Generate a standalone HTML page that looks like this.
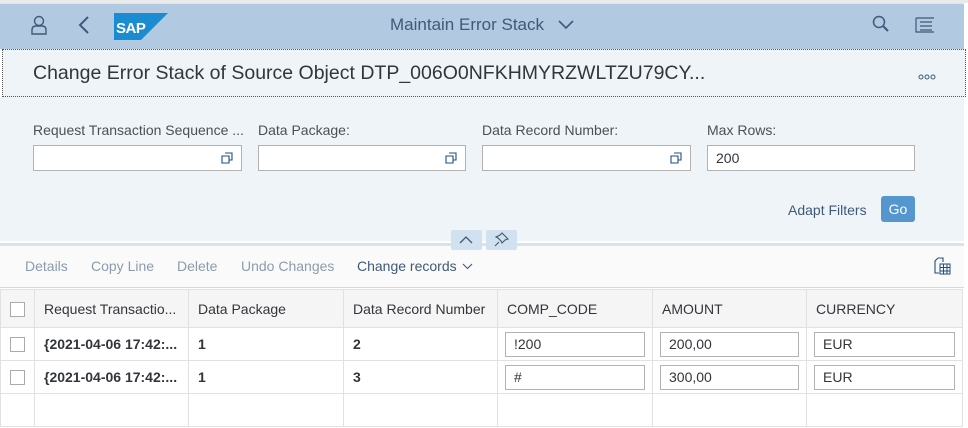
<!DOCTYPE html>
<html><head><meta charset="utf-8"><style>
*{box-sizing:border-box;margin:0;padding:0}
body{width:968px;height:428px;overflow:hidden;background:#fff;font-family:"Liberation Sans",Arial,sans-serif;position:relative;color:#32363a}
.abs{position:absolute}
.shell{left:0;top:3px;width:964px;height:46px;background:#b1c9e1;border-top:1px solid #dfe6ee}
.title{left:2px;top:49px;width:964px;height:48px;background:#eff4f9;border:1px dotted #555;}
.filt{left:0;top:97px;width:964px;height:144px;background:#eff4f9}
.lbl{font-size:14px;color:#4a5054;top:122px}
.inp{height:26px;background:#fff;border:1px solid #b2b2b2;top:145px}
.vh{position:absolute;right:8px;top:6px;width:12px;height:12px}
.tb{left:0;top:243px;width:964px;height:45px;background:#fafafa;border-top:3px solid #d6e3ef;border-bottom:1px solid #d9d9d9}
.tbt{top:258px;font-size:14px;color:#8b9cae}
table{position:absolute;left:0;top:289px;border-collapse:collapse;width:962px;table-layout:fixed}
td{border:1px solid #e1e1e1;font-size:14px;height:33px;padding:0 9px;vertical-align:middle;white-space:nowrap;overflow:hidden}
tr.h td{background:#f5f5f5;height:38px;color:#32363a}
tr.r td{font-weight:bold;color:#32363a;height:33px}
.cb{display:inline-block;width:15px;height:15px;border:1px solid #aaa;background:#fff;vertical-align:middle}
.ci{border:1px solid #b2b2b2;height:25px;font-weight:normal;padding-left:8px;line-height:23px;font-size:14px}
</style></head><body>
<div class="abs" style="left:0;top:0;width:968px;height:3px;background:#eaeaea"></div>
<div class="abs shell"></div>
<svg class="abs" style="left:30px;top:15px" width="18" height="20" viewBox="0 0 18 20"><circle cx="9" cy="6" r="4.5" fill="none" stroke="#3f5a78" stroke-width="1.4"/><path d="M2 19 V15 Q2 11 6 11 H12 Q16 11 16 15 V19 Z" fill="none" stroke="#3f5a78" stroke-width="1.4"/></svg>
<svg class="abs" style="left:78px;top:16px" width="12" height="18" viewBox="0 0 12 18"><path d="M10 1 L2 9 L10 17" fill="none" stroke="#3f5a78" stroke-width="2"/></svg>
<svg class="abs" style="left:114px;top:13px" width="54" height="27" viewBox="0 0 54 27"><path d="M0 0 H54 L27 27 H0 Z" fill="#1b8bd2"/><text x="2" y="20" font-family="Liberation Sans" font-weight="bold" font-size="15" fill="#fff" letter-spacing="-0.5">SAP</text></svg>
<div class="abs" style="left:390px;top:15px;font-size:17px;color:#3f5a78">Maintain Error Stack</div>
<svg class="abs" style="left:558px;top:20px" width="16" height="10" viewBox="0 0 16 10"><path d="M1 1 L8 8 L15 1" fill="none" stroke="#3f5a78" stroke-width="1.6"/></svg>
<svg class="abs" style="left:872px;top:15px" width="18" height="18" viewBox="0 0 18 18"><circle cx="7" cy="7" r="5.5" fill="none" stroke="#3f5a78" stroke-width="1.5"/><path d="M11 11 L16 16" stroke="#3f5a78" stroke-width="2"/></svg>
<svg class="abs" style="left:915px;top:17px" width="20" height="16" viewBox="0 0 20 16"><path d="M1 1 V15 H19 M1 1 H19 M5 5 H17 M5 9 H17 M5 13 H17" fill="none" stroke="#3f5a78" stroke-width="1.2"/></svg>
<div class="abs title"></div>
<div class="abs" style="left:33px;top:62px;font-size:19.5px;color:#32363a">Change Error Stack of Source Object DTP_006O0NFKHMYRZWLTZU79CY...</div>
<svg class="abs" style="left:918px;top:74px" width="18" height="6" viewBox="0 0 18 6"><circle cx="3" cy="3" r="2" fill="none" stroke="#3f5a78"/><circle cx="9" cy="3" r="2" fill="none" stroke="#3f5a78"/><circle cx="15" cy="3" r="2" fill="none" stroke="#3f5a78"/></svg>
<div class="abs filt"></div>
<div class="abs lbl" style="left:33px">Request Transaction Sequence ...</div>
<div class="abs lbl" style="left:258px">Data Package:</div>
<div class="abs lbl" style="left:482px">Data Record Number:</div>
<div class="abs lbl" style="left:707px">Max Rows:</div>
<div class="abs inp" style="left:33px;width:209px"><svg class="vh" viewBox="0 0 12 12"><path d="M4 1 H11 V8 H8 M1 4 H8 V11 H1 Z" fill="none" stroke="#1f4f85" stroke-width="1.1"/></svg></div>
<div class="abs inp" style="left:258px;width:208px"><svg class="vh" viewBox="0 0 12 12"><path d="M4 1 H11 V8 H8 M1 4 H8 V11 H1 Z" fill="none" stroke="#1f4f85" stroke-width="1.1"/></svg></div>
<div class="abs inp" style="left:482px;width:209px"><svg class="vh" viewBox="0 0 12 12"><path d="M4 1 H11 V8 H8 M1 4 H8 V11 H1 Z" fill="none" stroke="#1f4f85" stroke-width="1.1"/></svg></div>
<div class="abs inp" style="left:707px;width:208px;padding:4px 8px;font-size:14px;color:#32363a">200</div>
<div class="abs" style="left:788px;top:202px;font-size:14px;color:#3f5a78">Adapt Filters</div>
<div class="abs" style="left:881px;top:196px;width:34px;height:26px;background:#5496cd;border-radius:3px;color:#fff;font-size:14px;text-align:center;line-height:26px">Go</div>
<div class="abs tb"></div>
<div class="abs" style="left:451px;top:230px;width:31px;height:20px;background:#d1e1ef;border-radius:2px"></div>
<svg class="abs" style="left:459px;top:236px" width="14" height="8"><path d="M1 7 L7 1 L13 7" fill="none" stroke="#3f5a78" stroke-width="1.3"/></svg>
<div class="abs" style="left:486px;top:230px;width:31px;height:20px;background:#d1e1ef;border-radius:2px"></div>
<svg class="abs" style="left:494px;top:232px" width="15" height="15" viewBox="0 0 15 15"><path d="M8 1 L14 7 L11 8 L8 11 L7 9 L4 6 L2 5 L6 3 Z M5 10 L1 14" fill="none" stroke="#3f5a78" stroke-width="1.1"/></svg>
<div class="abs tbt" style="left:25px">Details</div>
<div class="abs tbt" style="left:91px">Copy Line</div>
<div class="abs tbt" style="left:177px">Delete</div>
<div class="abs tbt" style="left:241px">Undo Changes</div>
<div class="abs tbt" style="left:357px;color:#3f5a78">Change records</div>
<svg class="abs" style="left:462px;top:263px" width="11" height="7"><path d="M1 1 L5.5 5.5 L10 1" fill="none" stroke="#3f5a78" stroke-width="1.1"/></svg>
<svg class="abs" style="left:934px;top:257px" width="17" height="18" viewBox="0 0 17 18"><path d="M4 1 H9 V5 M4 1 L1 4 V16 H5" fill="none" stroke="#1f4f85" stroke-width="1.1"/><path d="M6 7 H16 V17 H6 Z M6 10.5 H16 M6 14 H16 M9.5 7 V17 M13 7 V17" fill="none" stroke="#1f4f85" stroke-width="1"/></svg>
<table>
<colgroup><col style="width:34px"><col style="width:154px"><col style="width:155px"><col style="width:154px"><col style="width:155px"><col style="width:154px"><col style="width:156px"></colgroup>
<tr class="h"><td style="padding:0 9px"><span class="cb"></span></td><td>Request Transactio...</td><td>Data Package</td><td>Data Record Number</td><td>COMP_CODE</td><td>AMOUNT</td><td>CURRENCY</td></tr>
<tr class="r"><td style="padding:0 9px"><span class="cb"></span></td><td>{2021-04-06 17:42:...</td><td>1</td><td>2</td><td style="padding:0 7px"><div class="ci">!200</div></td><td style="padding:0 7px"><div class="ci">200,00</div></td><td style="padding:0 7px"><div class="ci">EUR</div></td></tr>
<tr class="r"><td style="padding:0 9px"><span class="cb"></span></td><td>{2021-04-06 17:42:...</td><td>1</td><td>3</td><td style="padding:0 7px"><div class="ci">#</div></td><td style="padding:0 7px"><div class="ci">300,00</div></td><td style="padding:0 7px"><div class="ci">EUR</div></td></tr>
<tr class="r"><td></td><td></td><td></td><td></td><td></td><td></td><td></td></tr>
</table>
</body></html>
